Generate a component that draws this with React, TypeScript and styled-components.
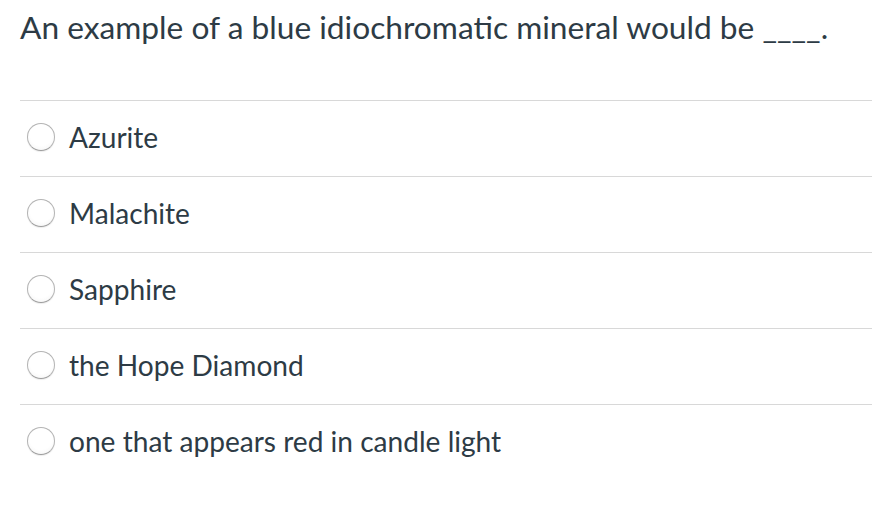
import styled, { createGlobalStyle } from "styled-components";

const GlobalStyle = createGlobalStyle`
  html, body {
    margin: 0;
    background: #ffffff;
  }
  body {
    font-family: Lato, "Open Sans", sans-serif;
    color: #2d3b45;
  }
`;

const answers = [
  "Azurite",
  "Malachite",
  "Sapphire",
  "the Hope Diamond",
  "one that appears red in candle light",
];

const App = () => (
  <>
    <GlobalStyle />
    <Question>
      <QuestionText>
        An example of a blue idiochromatic mineral would be ____.
      </QuestionText>
      <AnswerList>
        {answers.map((answer) => (
          <Answer key={answer}>
            <Radio />
            <AnswerLabel>{answer}</AnswerLabel>
          </Answer>
        ))}
      </AnswerList>
    </Question>
  </>
);

const Question = styled.div`
  padding-left: 20px;
`;

const QuestionText = styled.p`
  margin: 0;
  padding-top: 7px;
  height: 93px;
  font-size: 31.7px;
  line-height: 40px;
  white-space: nowrap;
`;

const AnswerList = styled.div`
  display: flex;
  flex-direction: column;
`;

const Answer = styled.label`
  display: flex;
  align-items: center;
  gap: 14px;
  height: 72px;
  padding: 0 0 3px 7px;
  border-top: 1px solid #d8d8d8;
`;

const Radio = styled.span`
  box-sizing: border-box;
  width: 28px;
  height: 28px;
  border-radius: 50%;
  border: 1px solid #b4b4b4;
  border-bottom-color: #9c9c9c;
  background: radial-gradient(circle at 50% 40%, #ffffff 55%, #f1f1f1 100%);
  box-shadow: 0 1px 1px rgba(0, 0, 0, 0.08);
  flex: none;
`;

const AnswerLabel = styled.span`
  font-size: 28.1px;
  line-height: 34px;
`;

export default App;
